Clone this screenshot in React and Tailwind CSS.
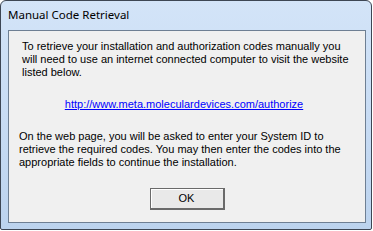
export default function App() {
  const font = { fontFamily: '"Liberation Sans", Arial, sans-serif' };
  return (
    <div className="w-[373px] h-[231px] bg-white relative overflow-hidden">
      <div className="w-[372px] h-[230px] rounded-t-[6px] rounded-b-[2px] border border-[#3d4654] bg-gradient-to-b from-[#d3e4f8] via-[#c8dcf4] to-[#bcd3ee] flex flex-col">
        <div className="h-[29px] flex items-center pl-[7px] pb-[1px] text-[11.5px] text-black" style={{ fontFamily: '"Noto Sans", "DejaVu Sans", sans-serif' }}>
          Manual Code Retrieval
        </div>
        <div className="ml-[7px] mr-[5px] h-[193px] border border-[#6e7f93] bg-[#f0f0f0] flex flex-col text-[11px] leading-[13px] text-black whitespace-nowrap" style={font}>
          <p className="pl-[13px] pt-[9px]">
            To retrieve your installation and authorization codes manually you<br />
            will need to use an internet connected computer to visit the website<br />
            listed below.
          </p>
          <div className="mt-[19px] flex justify-center pr-[6px]">
            <span className="text-[#0000ff] underline">http://www.meta.moleculardevices.com/authorize</span>
          </div>
          <p className="pl-[10px] mt-[19px]">
            On the web page, you will be asked to enter your System ID to<br />
            retrieve the required codes. You may then enter the codes into the<br />
            appropriate fields to continue the installation.
          </p>
          <div className="mt-[19px] flex justify-center">
            <div className="w-[75px] h-[22px] border border-[#6a6a6a] border-b-2 border-r-2 bg-[#e9e9e9] shadow-[inset_1px_1px_0_#ffffff] flex items-center justify-center">OK</div>
          </div>
        </div>
      </div>
    </div>
  );
}
